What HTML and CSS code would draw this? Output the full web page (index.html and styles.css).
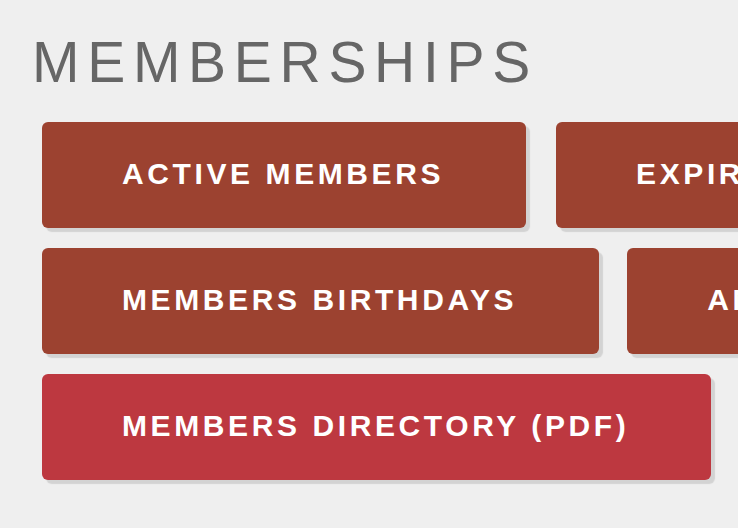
FILE: index.html
```html
<!DOCTYPE html>
<html>
<head>
<meta charset="utf-8">
<link rel="stylesheet" href="styles.css">
</head>
<body>
<main class="page">
  <h1 class="title">MEMBERSHIPS</h1>
  <div class="rows">
    <div class="row">
      <a class="btn">Active Members</a>
      <a class="btn">Expired Members</a>
    </div>
    <div class="row row-b">
      <a class="btn">Members Birthdays</a>
      <a class="btn">Anniversaries</a>
    </div>
    <div class="row">
      <a class="btn btn-red">Members Directory (PDF)</a>
    </div>
  </div>
</main>
</body>
</html>
```
FILE: styles.css
```css
html, body {
  margin: 0;
  padding: 0;
  background: #efefef;
  overflow: hidden;
}
.page {
  width: 738px;
  height: 528px;
  overflow: hidden;
  font-family: "Liberation Sans", Arial, sans-serif;
}
.title {
  margin: 0;
  padding: 34px 0 0 32px;
  font-size: 57px;
  line-height: 57px;
  font-weight: normal;
  letter-spacing: 7.7px;
  color: #666666;
  white-space: nowrap;
}
.rows {
  display: flex;
  flex-direction: column;
  gap: 20px;
  padding: 31px 0 0 42px;
}
.row {
  display: flex;
  gap: 30px;
}
.row-b {
  gap: 28px;
}
.btn {
  flex: none;
  display: block;
  padding: 35px 82px 37px 80px;
  font-size: 30px;
  line-height: 34px;
  font-weight: bold;
  letter-spacing: 3.6px;
  text-transform: uppercase;
  color: #ffffff;
  background: #9c4230;
  border-radius: 6px;
  box-shadow: 4px 4px 1px #d3d3d3;
  white-space: nowrap;
}
.btn-red {
  background: #bd3840;
}
```
